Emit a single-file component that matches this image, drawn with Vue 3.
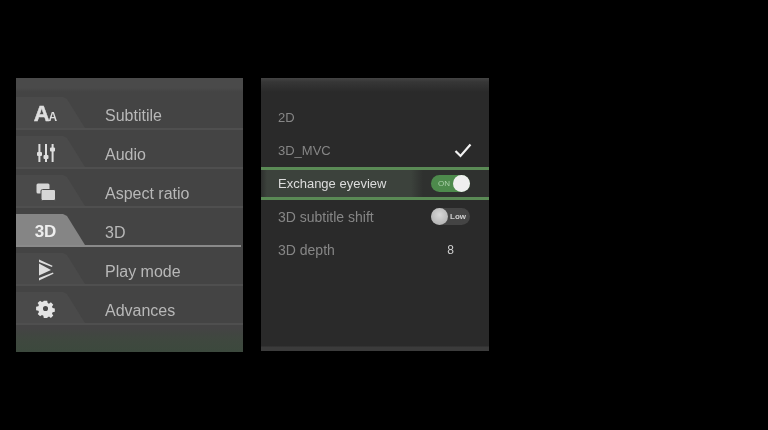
<script setup>
const menu = [
  { id: 'subtitle', label: 'Subtitile' },
  { id: 'audio', label: 'Audio' },
  { id: 'aspect', label: 'Aspect ratio' },
  { id: '3d', label: '3D', active: true },
  { id: 'play', label: 'Play mode' },
  { id: 'advances', label: 'Advances' }
]
</script>

<template>
  <div class="screen">
    <div class="panel left">
      <div v-for="item in menu" :key="item.id" class="menu-row" :class="{ active: item.active }">
        <div class="tab">
          <span v-if="item.id === 'subtitle'" class="aa"><b>A</b><i>A</i></span>
          <svg v-else-if="item.id === 'audio'" width="20" height="20" viewBox="0 0 20 20">
            <g fill="#dedede">
              <rect x="2.4" y="1" width="2" height="18" />
              <rect x="9" y="1" width="2" height="18" />
              <rect x="15.6" y="1" width="2" height="18" />
              <rect x="1" y="9" width="5" height="4" rx="1" />
              <rect x="7.5" y="12" width="5" height="4" rx="1" />
              <rect x="14" y="4.5" width="5" height="4" rx="1" />
            </g>
          </svg>
          <svg v-else-if="item.id === 'aspect'" width="20" height="18" viewBox="0 0 20 18">
            <rect x="0.5" y="0.5" width="13" height="10" rx="1.5" fill="#d6d6d6" />
            <rect x="5" y="6.5" width="14.5" height="11" rx="1.5" fill="#d6d6d6" stroke="#4a4a4a" stroke-width="1" />
          </svg>
          <span v-else-if="item.id === '3d'" class="three">3D</span>
          <svg v-else-if="item.id === 'play'" width="18" height="22" viewBox="0 0 18 22">
            <path d="M2 0.5 L15.5 6.8 L15 8 L2 3 Z" fill="#dedede" />
            <path d="M2 4.5 L14 11 L2 16.5 Z" fill="#dedede" />
            <path d="M2 19 L16 13.6 L16.5 14.8 L2 21.5 Z" fill="#dedede" />
          </svg>
          <svg v-else width="19" height="19" viewBox="0 0 20 20">
            <path
              fill="#e4e4e4"
              fill-rule="evenodd"
              d="M8 1h4l.5 2.6 1.6.7 2.2-1.5 2.8 2.8-1.5 2.2.7 1.6 2.6.5v4l-2.6.5-.7 1.6 1.5 2.2-2.8 2.8-2.2-1.5-1.6.7L12 21H8l-.5-2.6-1.6-.7-2.2 1.5-2.8-2.8 1.5-2.2-.7-1.6L-1 12V8l2.6-.5.7-1.6L.8 3.7l2.8-2.8 2.2 1.5 1.6-.7zM10 7a3 3 0 1 0 0 6a3 3 0 0 0 0-6z"
              transform="translate(1 1) scale(.9)"
            />
          </svg>
        </div>
        <span class="menu-label">{{ item.label }}</span>
      </div>
    </div>

    <div class="panel right">
      <div class="option">
        <span>2D</span>
      </div>
      <div class="option">
        <span>3D_MVC</span>
        <svg width="18" height="15" viewBox="0 0 18 15">
          <path d="M1.5 8 L6.5 13 L16.5 1.5" fill="none" stroke="#f2f2f2" stroke-width="2.2" />
        </svg>
      </div>
      <div class="option selected">
        <span>Exchange eyeview</span>
        <div class="toggle on">
          <small>ON</small>
          <em></em>
        </div>
      </div>
      <div class="option big">
        <span>3D subtitle shift</span>
        <div class="toggle off">
          <em></em>
          <small>Low</small>
        </div>
      </div>
      <div class="option big">
        <span>3D depth</span>
        <b class="depth">8</b>
      </div>
    </div>
  </div>
</template>

<style>
html,
body {
  background: #000;
}
</style>

<style scoped>
.screen {
  width: 768px;
  height: 430px;
  box-sizing: border-box;
  padding: 78px 0 0 16px;
  display: flex;
  align-items: flex-start;
  gap: 18px;
  background: #000;
  font-family: 'Liberation Sans', Arial, sans-serif;
  overflow: hidden;
}

.panel {
  filter: blur(0.6px);
  box-sizing: border-box;
}

.left {
  width: 227px;
  height: 274px;
  padding-top: 13px;
  background: linear-gradient(#4a4a4a 0, #4a4a4a 10px, #444 14px, #444 250px, #3f483f 262px, #3c493d 274px);
}

.menu-row {
  height: 39px;
  box-sizing: border-box;
  display: flex;
  align-items: flex-end;
  border-bottom: 2px solid #4f4f4f;
}

.tab {
  width: 69px;
  height: 31px;
  margin-right: 20px;
  padding: 2px 10px 0 0;
  box-sizing: border-box;
  display: flex;
  align-items: center;
  justify-content: center;
  background: #4a4a4a;
  clip-path: polygon(0 0, 47px 0, 51px 2px, 69px 31px, 0 31px);
}

.menu-label {
  line-height: 25px;
  font-size: 16px;
  color: #b8b8b8;
  white-space: nowrap;
}

.menu-row.active {
  width: 225px;
  border-bottom: 2px solid #8a8a8a;
}

.active .tab {
  background: #858585;
}

.aa {
  display: flex;
  align-items: baseline;
  color: #dedede;
  line-height: 1;
}

.aa b {
  font-size: 22px;
  -webkit-text-stroke: 0.5px #dedede;
}

.aa i {
  margin-left: -1px;
  font-size: 12px;
  font-weight: bold;
  font-style: normal;
}

.three {
  margin-top: 3px;
  font-size: 17px;
  font-weight: bold;
  color: #eee;
}

.right {
  width: 228px;
  height: 273px;
  padding-top: 23px;
  background: linear-gradient(#444 0, #363636 4px, #2a2a2a 14px, #2a2a2a 268px, #3b3b3b 269px);
}

.option {
  height: 33px;
  padding: 0 17px;
  display: flex;
  align-items: center;
  justify-content: space-between;
  font-size: 13px;
  color: #868686;
}

.option.big {
  font-size: 14px;
}

.option.selected {
  box-sizing: border-box;
  color: #dcdcdc;
  border-top: 3px solid #5a8a55;
  border-bottom: 3px solid #5a8a55;
  background: linear-gradient(90deg, #2e302e 0, #3c423c 6px, #3c423c 150px, #2f312f 162px, #2f312f 100%);
}

.toggle {
  width: 39px;
  height: 17px;
  margin-right: 2px;
  border-radius: 9px;
  display: flex;
  align-items: center;
  justify-content: space-between;
  box-sizing: border-box;
}

.toggle em {
  width: 17px;
  height: 17px;
  border-radius: 50%;
  background: #efefef;
}

.toggle small {
  font-size: 8px;
}

.toggle.on {
  background: #4d8a4c;
  padding-left: 7px;
  color: #a9cfa8;
}

.toggle.off {
  background: #444;
  padding-right: 4px;
  color: #cfcfcf;
}

.toggle.off em {
  background: radial-gradient(circle at 50% 40%, #d8d8d8, #a8a8a8);
}

.toggle.off small {
  font-weight: bold;
}

.depth {
  margin-right: 18px;
  font-size: 12px;
  font-weight: normal;
  color: #cfcfcf;
}
</style>
